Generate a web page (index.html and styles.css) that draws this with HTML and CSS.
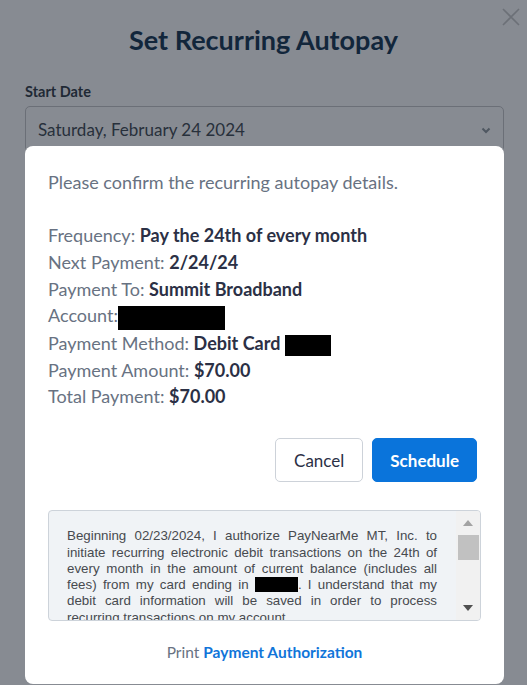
FILE: index.html
```html
<!DOCTYPE html>
<html lang="en">
<head>
<meta charset="utf-8">
<title>Set Recurring Autopay</title>
<link rel="stylesheet" href="styles.css">
</head>
<body>
<div class="backdrop">
  <button class="close" aria-label="Close">
    <svg width="18" height="18" viewBox="0 0 18 18"><path d="M1 1L17 17M17 1L1 17" stroke="#6c7077" stroke-width="1.6" fill="none"/></svg>
  </button>
  <h1 class="title">Set Recurring Autopay</h1>
  <div class="field">
    <div class="field-label">Start Date</div>
    <div class="select">
      <span>Saturday, February 24 2024</span>
      <svg class="chevron" width="10" height="7" viewBox="0 0 10 7"><path d="M1.5 1.5L5 5L8.5 1.5" stroke="#4f5761" stroke-width="2" fill="none"/></svg>
    </div>
  </div>
</div>

<div class="confirm">
  <p class="intro">Please confirm the recurring autopay details.</p>
  <ul class="details">
    <li>Frequency: <b>Pay the 24th of every month</b></li>
    <li>Next Payment: <b>2/24/24</b></li>
    <li>Payment To: <b>Summit Broadband</b></li>
    <li>Account:<span class="redact redact-account"></span></li>
    <li>Payment Method: <b>Debit Card</b> <span class="redact redact-card"></span></li>
    <li>Payment Amount: <b>$70.00</b></li>
    <li>Total Payment: <b>$70.00</b></li>
  </ul>
  <div class="actions">
    <button class="btn btn-secondary">Cancel</button>
    <button class="btn btn-primary">Schedule</button>
  </div>
  <div class="terms">
    <div class="terms-text">Beginning 02/23/2024, I authorize PayNearMe MT, Inc. to initiate recurring electronic debit transactions on the 24th of every month in the amount of current balance (includes all fees) from my card ending in <span class="redact redact-inline"></span>. I understand that my debit card information will be saved in order to process recurring transactions on my account.</div>
    <div class="scrollbar">
      <div class="sb-btn"><svg width="10" height="6" viewBox="0 0 10 6"><path d="M0 6L5 0L10 6Z" fill="#a3a3a3"/></svg></div>
      <div class="sb-thumb"></div>
      <div class="sb-track"></div>
      <div class="sb-btn"><svg width="10" height="6" viewBox="0 0 10 6"><path d="M0 0L10 0L5 6Z" fill="#505050"/></svg></div>
    </div>
  </div>
  <p class="print">Print <a href="#" class="print-link">Payment Authorization</a></p>
</div>
</body>
</html>
```

FILE: styles.css
```css
* { box-sizing: border-box; }

html, body {
  margin: 0;
  height: 100%;
}

body {
  background: #878b92;
  font-family: Lato, "Open Sans", sans-serif;
  overflow: hidden;
}

.backdrop {
  padding-top: 24px;
}

.close {
  position: absolute;
  top: 8px;
  right: 7px;
  border: 0;
  padding: 0;
  background: none;
  width: 18px;
  height: 18px;
}
.close svg { display: block; }

.title {
  margin: 0;
  text-align: center;
  font-size: 27px;
  line-height: 32px;
  font-weight: 700;
  color: #12263b;
}

.field {
  margin: 27px 0 0 25px;
  width: 479px;
}

.field-label {
  font-size: 14.5px;
  line-height: 18px;
  font-weight: 700;
  color: #1f2935;
}

.select {
  margin-top: 5px;
  height: 46px;
  border: 1px solid #6b6f77;
  border-radius: 5px;
  display: flex;
  align-items: center;
  justify-content: space-between;
  padding: 0 12px 0 12px;
  font-size: 17px;
  color: #27303b;
}
.chevron { display: block; margin-top: 3px; }

.confirm {
  position: absolute;
  top: 146px;
  left: 25px;
  width: 479px;
  height: 538px;
  background: #fff;
  border-radius: 8px;
  padding: 24px 23px 0;
}

.intro {
  margin: 0;
  font-size: 18px;
  line-height: 24px;
  color: #687282;
}

.details {
  list-style: none;
  margin: 28px 0 0;
  padding: 0;
  font-size: 18px;
  line-height: 26.8px;
  color: #687282;
}
.details b {
  color: #2b3045;
  font-weight: 700;
}

.redact {
  display: inline-block;
  background: #000;
  vertical-align: middle;
}
.redact-account { width: 107px; height: 24px; }
.redact-card { width: 46px; height: 21px; }

.actions {
  margin: 28px 4px 0 0;
  display: flex;
  justify-content: flex-end;
  gap: 9px;
}

.btn {
  height: 44px;
  border-radius: 5px;
  font-family: inherit;
  font-size: 17px;
  cursor: pointer;
}
.btn-secondary {
  background: #fff;
  border: 1px solid #cdd2d9;
  color: #2b3045;
  padding: 0 18px;
}
.btn-primary {
  background: #0a74db;
  border: 1px solid #0a74db;
  color: #fff;
  font-weight: 700;
  padding: 0 17px;
}

.terms {
  margin-top: 28px;
  height: 111px;
  border: 1px solid #cdd3da;
  border-radius: 4px;
  background: #f0f3f6;
  display: flex;
  overflow: hidden;
}

.terms-text {
  flex: 1;
  padding: 17px 19px 0 18px;
  font-family: "Liberation Sans", Arial, sans-serif;
  font-size: 13.33px;
  line-height: 16.3px;
  color: #474a4f;
  text-align: justify;
  overflow: hidden;
}
.redact-inline {
  width: 43px;
  height: 15px;
  vertical-align: -3px;
}

.scrollbar {
  width: 24px;
  background: #f1f1f1;
  display: flex;
  flex-direction: column;
}
.sb-btn {
  height: 24px;
  display: flex;
  align-items: center;
  justify-content: center;
}
.sb-btn svg { display: block; }
.sb-thumb {
  height: 25px;
  margin: 0 1px 0 2px;
  background: #c1c1c1;
}
.sb-track { flex: 1; }

.print {
  margin: 19px 0 0;
  text-align: center;
  font-size: 15.5px;
  line-height: 24px;
  color: #687282;
}
.print-link {
  color: #1175d9;
  font-weight: 700;
  text-decoration: none;
}
```
